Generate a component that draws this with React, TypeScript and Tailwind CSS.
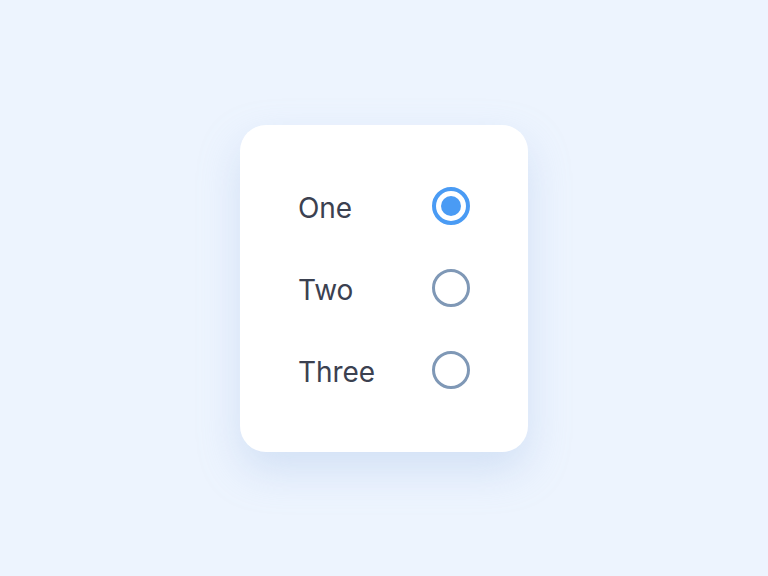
import React from "react";

const items = ["One", "Two", "Three"];

function Radio({ checked }: { checked: boolean }) {
  return checked ? (
    <div className="w-[38px] h-[38px] rounded-full border-[4px] border-[#4a9bf4] flex items-center justify-center">
      <div className="w-[20px] h-[20px] rounded-full bg-[#4a9bf4]" />
    </div>
  ) : (
    <div className="w-[38px] h-[38px] rounded-full border-[3.5px] border-[#7f98b6]" />
  );
}

export default function App() {
  return (
    <div className="w-full h-[576px] bg-[#edf4fe] flex items-center justify-center" style={{ fontFamily: "Inter, 'Open Sans', sans-serif" }}>
      <div className="w-[288px] h-[327px] bg-white rounded-[26px] pt-[40px] pb-[41px] px-[58px] flex flex-col shadow-[0_18px_40px_rgba(160,190,230,0.35)]">
        {items.map((t, i) => (
          <div key={t} className="h-[82px] flex items-center justify-between">
            <span className="text-[28px] leading-none pt-[4px] text-[#3b4150] tracking-[-0.1px]">{t}</span>
            <Radio checked={i === 0} />
          </div>
        ))}
      </div>
    </div>
  );
}
